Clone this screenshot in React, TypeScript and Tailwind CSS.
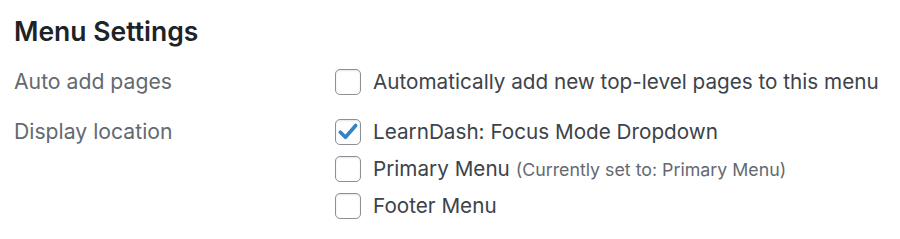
const font = { fontFamily: "Inter, 'Noto Sans', sans-serif" };

function Box({ checked = false }: { checked?: boolean }) {
  return (
    <span className="flex h-[26px] w-[26px] shrink-0 items-center justify-center rounded-[5px] border border-[#8c8f94] bg-white shadow-[inset_0_1px_2px_rgba(0,0,0,0.1)]">
      {checked && (
        <svg viewBox="0 0 20 20" className="h-[24px] w-[24px]">
          <path d="M3.6 10.2 L7.9 14.4 L16.4 4.6" fill="none" stroke="#3582c4" strokeWidth="3" strokeLinecap="round" strokeLinejoin="round" />
        </svg>
      )}
    </span>
  );
}

function Option({ checked, children }: { checked?: boolean; children: React.ReactNode }) {
  return (
    <label className="flex h-[37px] items-center gap-3">
      <Box checked={checked} />
      <span className="text-[20.7px] text-[#3c434a]">{children}</span>
    </label>
  );
}

export default function App() {
  return (
    <div className="h-[239px] w-[900px] bg-white px-[14px] pt-[14px]" style={font}>
      <h2 className="text-[26.5px] font-semibold leading-[34px] text-[#1d2327]">Menu Settings</h2>
      <div className="mt-[15px] grid grid-cols-[321px_1fr] items-center">
        <div className="text-[21.2px] text-[#646970]">Auto add pages</div>
        <Option>Automatically add new top-level pages to this menu</Option>
      </div>
      <div className="mt-[13px] grid grid-cols-[321px_1fr]">
        <div className="flex h-[37px] items-center text-[21.2px] text-[#646970]">Display location</div>
        <div>
          <Option checked>LearnDash: Focus Mode Dropdown</Option>
          <Option>
            Primary Menu{" "}
            <span className="text-[17.8px] text-[#646970]">(Currently set to: Primary Menu)</span>
          </Option>
          <Option>Footer Menu</Option>
        </div>
      </div>
    </div>
  );
}
